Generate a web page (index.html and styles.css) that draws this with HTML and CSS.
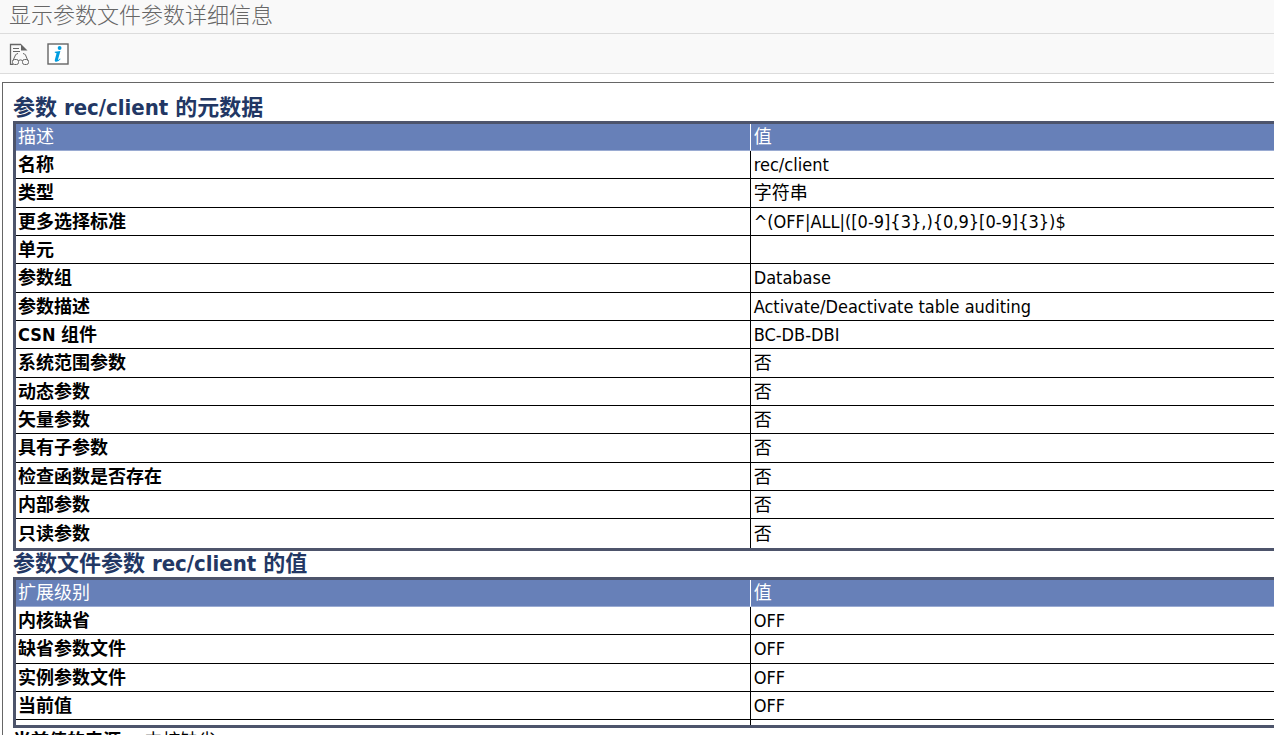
FILE: index.html
```html
<!DOCTYPE html>
<html lang="zh-CN">
<head>
  <meta charset="UTF-8">
  <meta name="viewport" content="width=device-width, initial-scale=1">
  <title>显示参数文件参数详细信息</title>
  <link rel="stylesheet" href="styles.css">
</head>
<body>

  <header class="title-bar">
    <h1>显示参数文件参数详细信息</h1>
  </header>

  <div class="toolbar">
    <button type="button" aria-label="显示">
      <svg width="22" height="22" viewBox="0 0 22 22" fill="none" stroke="#666">
        <path d="M4 21.500H1.500V1.500H12" stroke-width="1.300"/>
        <path d="M4 5.500h6M4 8.500h7"/>
        <path d="M12 1v6.500h6.500z" fill="#666" stroke="none"/>
        <path d="M4 17.500L6.500 12q.7-1.300 2.500-1.500M18.800 17.500L16.500 12q-.7-1.300-2.500-1.500"/>
        <rect x="3.500" y="16.500" width="6" height="5" rx="2"/>
        <rect x="13.500" y="16.500" width="6" height="5" rx="2"/>
        <path d="M9.500 17.500q2-1.200 4 0"/>
      </svg>
    </button>
    <button type="button" aria-label="信息">
      <svg width="22" height="22" viewBox="0 0 22 22">
        <rect x="1" y="1" width="20" height="20" fill="#fff" stroke="#666" stroke-width="1.400"/>
        <circle cx="12.600" cy="5" r="1.900" fill="#009de0"/>
        <path d="M7.800 8.800l5.600-.8-2.300 8.200q-.2 1 .6.600l1.300-1.200.6.500q-2 2.700-4.200 2.700-2.100 0-1.500-2.300l1.600-6q.2-.8-1.700-.8z" fill="#009de0"/>
      </svg>
    </button>
  </div>

  <main class="panel">
    <h2>参数 rec/client 的元数据</h2>
    <table>
      <thead>
        <tr><th scope="col">描述</th><th scope="col">值</th></tr>
      </thead>
      <tbody>
        <tr><th scope="row">名称</th><td>rec/client</td></tr>
        <tr><th scope="row">类型</th><td>字符串</td></tr>
        <tr><th scope="row">更多选择标准</th><td>^(OFF|ALL|([0-9]{3},){0,9}[0-9]{3})$</td></tr>
        <tr><th scope="row">单元</th><td></td></tr>
        <tr><th scope="row">参数组</th><td>Database</td></tr>
        <tr><th scope="row">参数描述</th><td>Activate/Deactivate table auditing</td></tr>
        <tr><th scope="row">CSN 组件</th><td>BC-DB-DBI</td></tr>
        <tr><th scope="row">系统范围参数</th><td>否</td></tr>
        <tr><th scope="row">动态参数</th><td>否</td></tr>
        <tr><th scope="row">矢量参数</th><td>否</td></tr>
        <tr><th scope="row">具有子参数</th><td>否</td></tr>
        <tr><th scope="row">检查函数是否存在</th><td>否</td></tr>
        <tr><th scope="row">内部参数</th><td>否</td></tr>
        <tr><th scope="row">只读参数</th><td>否</td></tr>
      </tbody>
    </table>

    <h2>参数文件参数 rec/client 的值</h2>
    <table>
      <thead>
        <tr><th scope="col">扩展级别</th><th scope="col">值</th></tr>
      </thead>
      <tbody>
        <tr><th scope="row">内核缺省</th><td>OFF</td></tr>
        <tr><th scope="row">缺省参数文件</th><td>OFF</td></tr>
        <tr><th scope="row">实例参数文件</th><td>OFF</td></tr>
        <tr><th scope="row">当前值</th><td>OFF</td></tr>
        <tr class="empty"><td></td><td></td></tr>
      </tbody>
    </table>

    <p class="source"><strong>当前值的来源：</strong> 内核缺省</p>
  </main>

</body>
</html>
```

FILE: styles.css
```css
* {
  box-sizing: border-box;
}
body {
  margin: 0;
  height: 100vh;
  overflow: hidden;
  display: flex;
  flex-direction: column;
  background: #fff;
  color: #000;
  font-family: "DejaVu Sans Condensed", "Noto Sans CJK SC", sans-serif;
  font-size: 18px;
}

/* top bars */
.title-bar {
  background: #f9f9f9;
  border-bottom: 1px solid #dcdcdc;
  padding: 0 9px;
}
.title-bar h1 {
  margin: 0;
  height: 33px;
  line-height: 26px;
  font-family: "Noto Sans CJK SC", sans-serif;
  font-size: 22px;
  font-weight: 300;
  color: #666;
}
.toolbar {
  display: flex;
  gap: 16px;
  padding: 9px 9px 8px;
  background: #f9f9f9;
  border-bottom: 1px solid #dcdcdc;
}
.toolbar button {
  display: flex;
  padding: 0;
  border: 0;
  background: none;
  cursor: pointer;
}

/* document area */
.panel {
  flex: 1;
  overflow: hidden;
  margin: 8px 0 0 2px;
  padding: 12px 0 0 10px;
  border-top: 1px solid #666;
  border-left: 1px solid #666;
}
h2 {
  margin: 0;
  height: 26px;
  line-height: 26px;
  font-size: 22px;
  color: #223764;
}
table {
  width: 117%;
  table-layout: fixed;
  border: 3px solid #4d546b;
  border-collapse: separate;
  border-spacing: 0;
}
th,
td {
  width: 50%;
  height: 28px;
  padding: 0 3px;
  border-bottom: 1px solid #000;
  line-height: 26px;
  text-align: left;
  white-space: nowrap;
}
th {
  padding-left: 2px;
}
th:first-child,
td:first-child {
  border-right: 1px solid #000;
}
thead th {
  height: 27px;
  background: #6780b8;
  border-bottom-color: #9aabd2;
  color: #fff;
  font-weight: 400;
}
thead th:first-child {
  border-right-color: #fff;
}
thead th + th {
  padding-left: 3px;
}
tbody tr:nth-child(3n+2) > * {
  height: 29px;
}
tbody tr:last-child > * {
  border-bottom: 0;
}
tbody tr.empty > * {
  height: 5px;
}
.source {
  margin: 0;
  line-height: 26px;
}
```
